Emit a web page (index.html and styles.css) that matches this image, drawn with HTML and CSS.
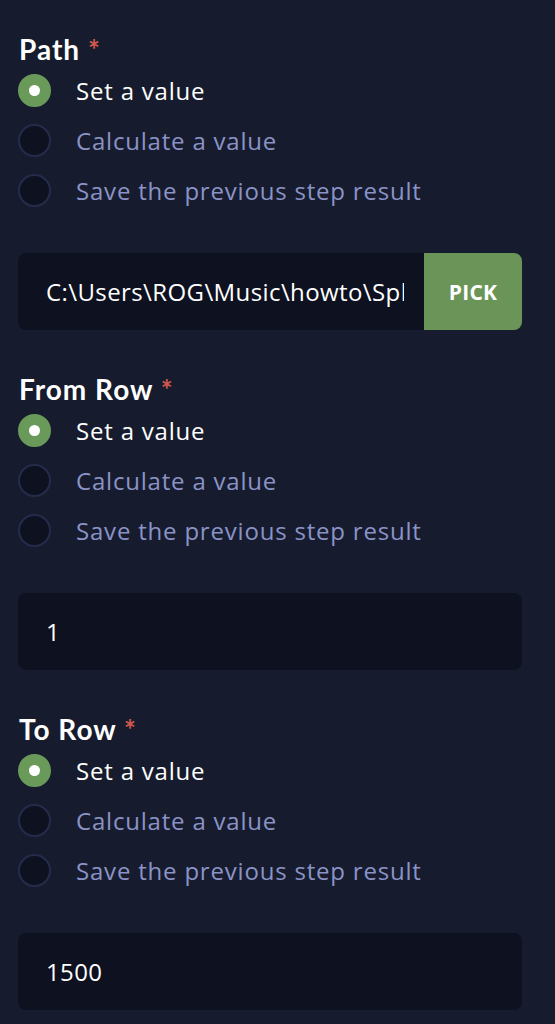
FILE: index.html
```html
<!DOCTYPE html>
<html lang="en">
<head>
  <meta charset="UTF-8">
  <meta name="viewport" content="width=device-width, initial-scale=1.0">
  <link rel="stylesheet" href="styles.css">
</head>
<body>

<div class="panel">

  <div class="field">
    <div class="field-label">Path <span class="req">*</span></div>
    <div class="options">
      <label class="option checked"><span class="radio"></span>Set a value</label>
      <label class="option"><span class="radio"></span>Calculate a value</label>
      <label class="option"><span class="radio"></span>Save the previous step result</label>
    </div>
    <div class="input-box">
      <div class="input-text">C:\Users\ROG\Music\howto\Split.xlsx</div>
      <button class="pick-btn">PICK</button>
    </div>
  </div>

  <div class="field">
    <div class="field-label">From Row <span class="req">*</span></div>
    <div class="options">
      <label class="option checked"><span class="radio"></span>Set a value</label>
      <label class="option"><span class="radio"></span>Calculate a value</label>
      <label class="option"><span class="radio"></span>Save the previous step result</label>
    </div>
    <div class="input-box">
      <div class="input-text">1</div>
    </div>
  </div>

  <div class="field">
    <div class="field-label">To Row <span class="req">*</span></div>
    <div class="options">
      <label class="option checked"><span class="radio"></span>Set a value</label>
      <label class="option"><span class="radio"></span>Calculate a value</label>
      <label class="option"><span class="radio"></span>Save the previous step result</label>
    </div>
    <div class="input-box">
      <div class="input-text">1500</div>
    </div>
  </div>

</div>

</body>
</html>
```

FILE: styles.css
```css
body {
  margin: 0;
  padding: 0;
  background-color: #161c2e;
  font-family: "Open Sans", "Noto Sans", sans-serif;
  color: #fff;
}

.panel {
  padding: 33px 33px 0 18px;
}

.field {
  margin-bottom: 43px;
}

.field-label {
  font-family: Lato, "Open Sans", sans-serif;
  font-weight: 700;
  font-size: 28px;
  line-height: 32px;
  letter-spacing: 1px;
  color: #fff;
  padding-left: 1px;
}

.req {
  color: #d0574f;
  margin-left: 0;
}

.options {
  display: flex;
  flex-direction: column;
}

.option {
  display: flex;
  align-items: center;
  height: 50px;
  font-size: 24px;
  letter-spacing: 0.8px;
  color: #8b93c6;
}

.option.checked {
  color: #fff;
}

.radio {
  box-sizing: border-box;
  width: 33px;
  height: 33px;
  border-radius: 50%;
  background-color: #0e1120;
  border: 2px solid #252c4b;
  margin-right: 25px;
  display: flex;
  align-items: center;
  justify-content: center;
}

.option.checked .radio {
  background-color: #6a9a5a;
  border-color: #6a9a5a;
}

.option.checked .radio::after {
  content: "";
  width: 11px;
  height: 11px;
  border-radius: 50%;
  background-color: #fff;
}

.input-box {
  margin-top: 38px;
  display: flex;
  align-items: center;
  height: 77px;
  background-color: #0e1120;
  border-radius: 8px;
  overflow: hidden;
}

.input-text {
  flex: 1;
  min-width: 0;
  margin: 0 20px 0 28px;
  font-size: 24px;
  letter-spacing: 0.4px;
  white-space: nowrap;
  overflow: hidden;
  color: #fff;
}

.pick-btn {
  align-self: stretch;
  width: 98px;
  border: none;
  background-color: #6a9458;
  color: #fff;
  font-family: "Open Sans", sans-serif;
  font-weight: 700;
  font-size: 21px;
  letter-spacing: 0.3px;
  cursor: pointer;
}
```
